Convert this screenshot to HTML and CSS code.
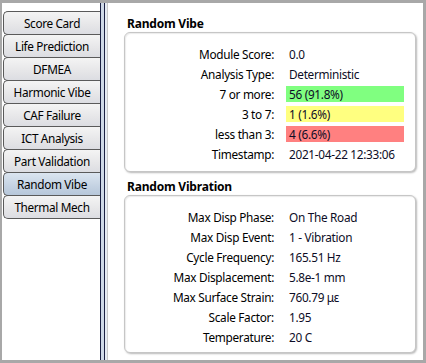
FILE: index.html
```html
<!DOCTYPE html>
<html>
<head>
<meta charset="utf-8">
<link rel="stylesheet" href="styles.css">
</head>
<body>
<div class="window">
  <nav class="tabs">
    <div class="tab">Score Card</div>
    <div class="tab">Life Prediction</div>
    <div class="tab">DFMEA</div>
    <div class="tab">Harmonic Vibe</div>
    <div class="tab">CAF Failure</div>
    <div class="tab">ICT Analysis</div>
    <div class="tab">Part Validation</div>
    <div class="tab active">Random Vibe</div>
    <div class="tab">Thermal Mech</div>
  </nav>
  <div class="divider"></div>
  <main class="panel">
    <h2 class="heading">Random Vibe</h2>
    <section class="group group-first">
      <div class="grid">
        <span class="label">Module Score:</span><span class="value">0.0</span>
        <span class="label">Analysis Type:</span><span class="value">Deterministic</span>
        <span class="label">7 or more:</span><span class="value bar green">56 (91.8%)</span>
        <span class="label">3 to 7:</span><span class="value bar yellow">1 (1.6%)</span>
        <span class="label">less than 3:</span><span class="value bar red">4 (6.6%)</span>
        <span class="label">Timestamp:</span><span class="value">2021-04-22 12:33:06</span>
      </div>
    </section>
    <h2 class="heading heading-second">Random Vibration</h2>
    <section class="group group-second">
      <div class="grid">
        <span class="label">Max Disp Phase:</span><span class="value">On The Road</span>
        <span class="label">Max Disp Event:</span><span class="value">1 - Vibration</span>
        <span class="label">Cycle Frequency:</span><span class="value">165.51 Hz</span>
        <span class="label">Max Displacement:</span><span class="value">5.8e-1 mm</span>
        <span class="label">Max Surface Strain:</span><span class="value">760.79 με</span>
        <span class="label">Scale Factor:</span><span class="value">1.95</span>
        <span class="label">Temperature:</span><span class="value">20 C</span>
      </div>
    </section>
  </main>
</div>
</body>
</html>
```
FILE: styles.css
```css
html, body {
  margin: 0;
  padding: 0;
}
body {
  background: #a8a8a8;
  width: 426px;
  height: 363px;
  overflow: hidden;
  font-family: "Noto Sans", "Liberation Sans", sans-serif;
  font-size: 11.8px;
  color: #000;
}
.window {
  margin: 3px 3px 0 2px;
  height: 357px;
  background: #fff;
  display: flex;
}
.tabs {
  width: 97px;
  padding: 8px 0 0 1px;
  display: flex;
  flex-direction: column;
}
.tab {
  box-sizing: border-box;
  height: 24px;
  margin-bottom: -1px;
  border: 1px solid #5a5a5a;
  border-right: none;
  border-radius: 5px 0 0 5px;
  background: linear-gradient(#f4f4f4, #e6e6e8 60%, #dcdde2);
  display: flex;
  align-items: center;
  justify-content: center;
  line-height: 16px;
  white-space: nowrap;
  letter-spacing: -0.35px;
}
.tab.active {
  background: linear-gradient(#dbe5f0, #c4d2e2 60%, #b7c7da);
}
.divider {
  width: 8px;
  background: linear-gradient(90deg,
    #1b2142 0, #1b2142 1px,
    #cfd9e7 1px, #cfd9e7 4px,
    #1b2142 4px, #1b2142 5px,
    #e6ebf3 5px, #e6ebf3 7px,
    #c8c8c8 7px, #c8c8c8 8px);
}
.panel {
  flex: 1;
  padding: 13px 7px 0 16px;
  display: flex;
  flex-direction: column;
}
.heading {
  margin: 0;
  padding-left: 3px;
  font-size: 12px;
  line-height: 16px;
  font-weight: bold;
  letter-spacing: -0.2px;
}
.heading-second {
  margin-top: 7px;
}
.group {
  border: 1px solid #c6c6c6;
  border-radius: 6px;
  box-shadow: 1px 1px 2px rgba(0, 0, 0, 0.28), inset 1px 1px 1px #ececec;
  background: #fff;
}
.group-first {
  padding: 11px 0 7px 0;
}
.group-second {
  padding: 11px 0 5px 0;
}
.grid {
  display: grid;
  grid-template-columns: 149px 118px;
  grid-auto-rows: 20px;
  column-gap: 12px;
  align-items: center;
}
.label {
  text-align: right;
  white-space: nowrap;
  letter-spacing: -0.3px;
}
.value {
  padding-left: 3px;
  white-space: nowrap;
  color: #0d0d26;
  letter-spacing: -0.3px;
  line-height: 16px;
}
.bar {
  height: 16px;
}
.green { background: #80ff80; }
.yellow { background: #ffff80; }
.red { background: #ff8080; }
```
